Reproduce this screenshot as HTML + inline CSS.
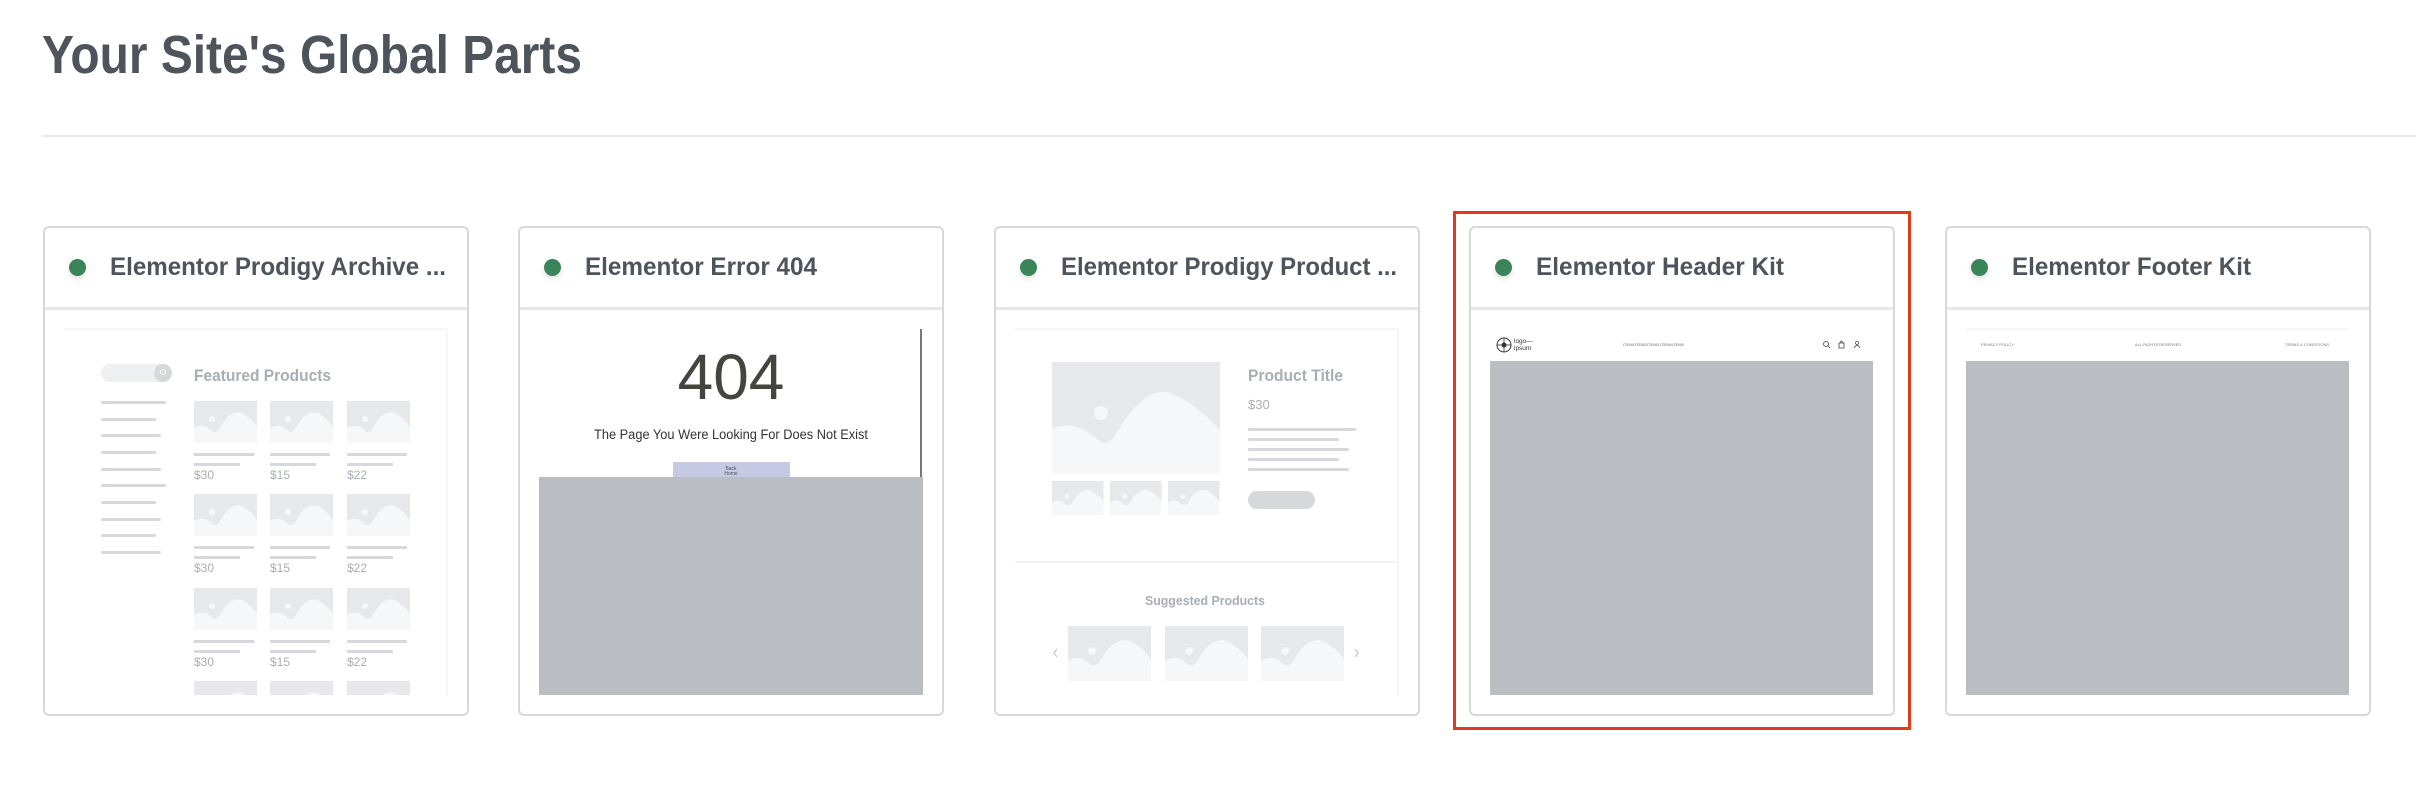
<!DOCTYPE html>
<html><head><meta charset="utf-8"><style>
*{margin:0;padding:0;box-sizing:border-box}
body{width:2416px;height:804px;background:#fff;position:relative;overflow:hidden;font-family:"Liberation Sans",sans-serif}
.a{position:absolute}
.card{position:absolute;top:226px;width:426px;height:490px;border:2px solid #d7d8dc;border-radius:6px;background:#fff;overflow:hidden}
.hd{position:absolute;left:0;top:79px;width:100%;height:3px;background:#e6e7ea}
.dot{position:absolute;left:24px;top:31px;width:17px;height:17px;border-radius:50%;background:#3a8459;box-shadow:0 3px 6px rgba(0,0,0,.12),0 0 0 3px #fff}
</style></head><body>
<svg class="a" style="left:0;top:0" width="700" height="100"><text x="42" y="73" font-family="Liberation Sans" font-weight="bold" font-size="54" fill="#4e545c" textLength="540" lengthAdjust="spacingAndGlyphs">Your Site's Global Parts</text></svg>
<div class="a" style="left:42px;top:135px;width:2374px;height:2px;background:#e6e7ea"></div>

<svg width="0" height="0" style="position:absolute"><defs>
<g id="im"><rect width="63" height="42" fill="#e7e8eb"/><path d="M0 27 Q10 21 18 30 Q22 33 26 27 Q36 8 48 12 Q58 18 63 26 V42 H0Z" fill="#f6f7f8"/><circle cx="18" cy="18" r="3" fill="#f6f7f8"/></g>
<g id="im2"><rect width="83" height="55" fill="#e7e8eb"/><path d="M0 35 Q12 27 22 38 Q27 42 32 35 Q46 10 62 15 Q75 22 83 33 V55 H0Z" fill="#f6f7f8"/><circle cx="24" cy="25" r="4" fill="#f6f7f8"/></g>
<clipPath id="fr"><rect x="21" y="329" width="384" height="366"/></clipPath>
</defs></svg>

<!-- card 1 -->
<div class="card" style="left:43px">
<div class="dot"></div>
<svg class="a" style="left:0;top:0" width="426" height="80"><text x="65" y="47" font-family="Liberation Sans" font-weight="bold" font-size="25" fill="#4e545c" textLength="336" lengthAdjust="spacingAndGlyphs">Elementor Prodigy Archive ...</text></svg>
<div class="hd"></div>
<svg class="a" style="left:-2px;top:-2px" width="426" height="490"><g transform="translate(0,-226)">
<line x1="21" y1="329" x2="404" y2="329" stroke="#eceef0"/><line x1="404" y1="329" x2="404" y2="695" stroke="#eceef0"/>
<g clip-path="url(#fr)">
<rect x="58" y="364" width="71" height="18" rx="9" fill="#eef0f1"/><circle cx="120" cy="373" r="9" fill="#d6d8dc"/><circle cx="120" cy="372" r="2.5" fill="none" stroke="#fff" stroke-width="1"/>
<text x="151" y="381" font-family="Liberation Sans" font-weight="bold" font-size="17" fill="#a9adb4" textLength="137" lengthAdjust="spacingAndGlyphs">Featured Products</text>
<g fill="#d6d8dc">
<rect x="58" y="401" width="65" height="3" rx="1.5"/><rect x="58" y="418" width="55" height="3" rx="1.5"/><rect x="58" y="434" width="60" height="3" rx="1.5"/><rect x="58" y="451" width="55" height="3" rx="1.5"/><rect x="58" y="468" width="60" height="3" rx="1.5"/><rect x="58" y="484" width="65" height="3" rx="1.5"/><rect x="58" y="501" width="55" height="3" rx="1.5"/><rect x="58" y="518" width="60" height="3" rx="1.5"/><rect x="58" y="534" width="55" height="3" rx="1.5"/><rect x="58" y="551" width="60" height="3" rx="1.5"/>
</g>
<use href="#im" x="151" y="401"/><use href="#im" x="227" y="401"/><use href="#im" x="304" y="401"/>
<use href="#im" x="151" y="494"/><use href="#im" x="227" y="494"/><use href="#im" x="304" y="494"/>
<use href="#im" x="151" y="588"/><use href="#im" x="227" y="588"/><use href="#im" x="304" y="588"/>
<use href="#im" x="151" y="681"/><use href="#im" x="227" y="681"/><use href="#im" x="304" y="681"/>
<g fill="#d6d8dc">
<rect x="151" y="453" width="60" height="3"/><rect x="151" y="463" width="46" height="3"/><rect x="227" y="453" width="60" height="3"/><rect x="227" y="463" width="46" height="3"/><rect x="304" y="453" width="60" height="3"/><rect x="304" y="463" width="46" height="3"/>
<rect x="151" y="546" width="60" height="3"/><rect x="151" y="556" width="46" height="3"/><rect x="227" y="546" width="60" height="3"/><rect x="227" y="556" width="46" height="3"/><rect x="304" y="546" width="60" height="3"/><rect x="304" y="556" width="46" height="3"/>
<rect x="151" y="640" width="60" height="3"/><rect x="151" y="650" width="46" height="3"/><rect x="227" y="640" width="60" height="3"/><rect x="227" y="650" width="46" height="3"/><rect x="304" y="640" width="60" height="3"/><rect x="304" y="650" width="46" height="3"/>
</g>
<g font-family="Liberation Sans" font-size="12" fill="#a9adb4">
<text x="151" y="479">$30</text><text x="227" y="479">$15</text><text x="304" y="479">$22</text>
<text x="151" y="572">$30</text><text x="227" y="572">$15</text><text x="304" y="572">$22</text>
<text x="151" y="666">$30</text><text x="227" y="666">$15</text><text x="304" y="666">$22</text>
</g>
</g>
</g></svg>
</div>

<!-- card 2 -->
<div class="card" style="left:518px">
<div class="dot"></div>
<svg class="a" style="left:0;top:0" width="426" height="80"><text x="65" y="47" font-family="Liberation Sans" font-weight="bold" font-size="25" fill="#4e545c" textLength="232" lengthAdjust="spacingAndGlyphs">Elementor Error 404</text></svg>
<div class="hd"></div>
<svg class="a" style="left:-2px;top:-2px" width="426" height="490"><g transform="translate(0,-226)">
<rect x="402" y="329" width="2" height="150" fill="#777"/>
<text x="213" y="399" text-anchor="middle" font-family="Liberation Sans" font-size="64" fill="#45443d">404</text>
<text x="213" y="439" text-anchor="middle" font-family="Liberation Sans" font-size="13.5" fill="#333" textLength="274" lengthAdjust="spacingAndGlyphs">The Page You Were Looking For Does Not Exist</text>
<rect x="155" y="462" width="117" height="20" fill="#c6c9e4"/>
<text x="213" y="470" text-anchor="middle" font-family="Liberation Sans" font-size="5" fill="#555">Back</text>
<text x="213" y="475" text-anchor="middle" font-family="Liberation Sans" font-size="5" fill="#555">Home</text>
<rect x="21" y="477" width="384" height="218" fill="#babdc2"/>
</g></svg>
</div>

<!-- card 3 -->
<div class="card" style="left:994px">
<div class="dot"></div>
<svg class="a" style="left:0;top:0" width="426" height="80"><text x="65" y="47" font-family="Liberation Sans" font-weight="bold" font-size="25" fill="#4e545c" textLength="336" lengthAdjust="spacingAndGlyphs">Elementor Prodigy Product ...</text></svg>
<div class="hd"></div>
<svg class="a" style="left:-2px;top:-2px" width="426" height="490">
<g transform="translate(0,-226)">
<line x1="21" y1="329" x2="404" y2="329" stroke="#eceef0"/><line x1="404" y1="329" x2="404" y2="695" stroke="#eceef0"/>
<rect x="58" y="362" width="168" height="112" fill="#e7e8eb"/><path d="M58 429 Q80 418 104 440 Q112 447 120 437 Q150 385 176 393 Q200 402 226 430 V474 H58Z" fill="#f6f7f8"/><circle cx="107" cy="413" r="7" fill="#f6f7f8"/>
<g transform="translate(58,481) scale(.62)"><use href="#im2"/></g><g transform="translate(116,481) scale(.62)"><use href="#im2"/></g><g transform="translate(174,481) scale(.62)"><use href="#im2"/></g>
<text x="254" y="381" font-family="Liberation Sans" font-weight="bold" font-size="17" fill="#a9adb4" textLength="95" lengthAdjust="spacingAndGlyphs">Product Title</text>
<text x="254" y="409" font-family="Liberation Sans" font-size="13" fill="#a9adb4">$30</text>
<g fill="#d6d8dc"><rect x="254" y="428" width="108" height="3" rx="1.5"/><rect x="254" y="438" width="91" height="3" rx="1.5"/><rect x="254" y="448" width="101" height="3" rx="1.5"/><rect x="254" y="458" width="91" height="3" rx="1.5"/><rect x="254" y="468" width="101" height="3" rx="1.5"/><rect x="254" y="491" width="67" height="18" rx="9"/></g>
<line x1="21" y1="562" x2="404" y2="562" stroke="#eceef0" stroke-width="1.5"/>
<text x="211" y="605" text-anchor="middle" font-family="Liberation Sans" font-weight="bold" font-size="12.5" fill="#a9adb4" textLength="120" lengthAdjust="spacingAndGlyphs">Suggested Products</text>
<use href="#im2" x="74" y="626"/><use href="#im2" x="171" y="626"/><use href="#im2" x="267" y="626"/>
<path d="M63 649 L60 653 L63 657" fill="none" stroke="#c4c7cc" stroke-width="1.2"/><path d="M361 649 L364 653 L361 657" fill="none" stroke="#c4c7cc" stroke-width="1.2"/>
</g></svg>
</div>

<!-- red highlight -->
<div class="a" style="left:1453px;top:211px;width:458px;height:519px;border:3px solid #e2391f"></div>

<!-- card 4 -->
<div class="card" style="left:1469px">
<div class="dot"></div>
<svg class="a" style="left:0;top:0" width="426" height="80"><text x="65" y="47" font-family="Liberation Sans" font-weight="bold" font-size="25" fill="#4e545c" textLength="248" lengthAdjust="spacingAndGlyphs">Elementor Header Kit</text></svg>
<div class="hd"></div>
<svg class="a" style="left:-2px;top:-2px" width="426" height="490"><g transform="translate(0,-226)">
<circle cx="35" cy="345" r="7" fill="none" stroke="#333" stroke-width="1"/><line x1="28" y1="345" x2="42" y2="345" stroke="#333" stroke-width=".8"/><line x1="35" y1="338" x2="35" y2="352" stroke="#333" stroke-width=".8"/><circle cx="35" cy="345" r="2.5" fill="#333"/>
<text x="45" y="343" font-family="Liberation Sans" font-size="6.5" fill="#333">logo—</text><text x="45" y="350" font-family="Liberation Sans" font-size="6.5" fill="#333">ipsum</text>
<g font-family="Liberation Sans" font-size="4" fill="#666"><text x="154" y="346">ITEM1</text><text x="166" y="346">ITEM2</text><text x="178" y="346">ITEM3</text><text x="191" y="346">ITEM4</text><text x="203" y="346">ITEM5</text></g>
<circle cx="357" cy="344" r="2.5" fill="none" stroke="#444" stroke-width=".8"/><line x1="359" y1="346" x2="361" y2="348" stroke="#444" stroke-width=".8"/>
<rect x="370" y="343" width="5" height="5" fill="none" stroke="#444" stroke-width=".8"/><path d="M371 343 Q372.5 339 374 343" fill="none" stroke="#444" stroke-width=".7"/>
<circle cx="388" cy="343" r="1.5" fill="none" stroke="#444" stroke-width=".7"/><path d="M385 348 Q388 343 391 348" fill="none" stroke="#444" stroke-width=".7"/>
<rect x="21" y="361" width="383" height="334" fill="#babdc2"/>
</g></svg>
</div>

<!-- card 5 -->
<div class="card" style="left:1945px">
<div class="dot"></div>
<svg class="a" style="left:0;top:0" width="426" height="80"><text x="65" y="47" font-family="Liberation Sans" font-weight="bold" font-size="25" fill="#4e545c" textLength="239" lengthAdjust="spacingAndGlyphs">Elementor Footer Kit</text></svg>
<div class="hd"></div>
<svg class="a" style="left:-2px;top:-2px" width="426" height="490"><g transform="translate(0,-226)">
<line x1="21" y1="329" x2="404" y2="329" stroke="#eceef0"/>
<g font-family="Liberation Sans" font-size="4" fill="#777"><text x="36" y="346">PRIVACY POLICY</text><text x="190" y="346">ALL RIGHTS RESERVED</text><text x="340" y="346">TERMS &amp; CONDITIONS</text></g>
<rect x="21" y="361" width="383" height="334" fill="#babdc2"/>
</g></svg>
</div>
</body></html>
